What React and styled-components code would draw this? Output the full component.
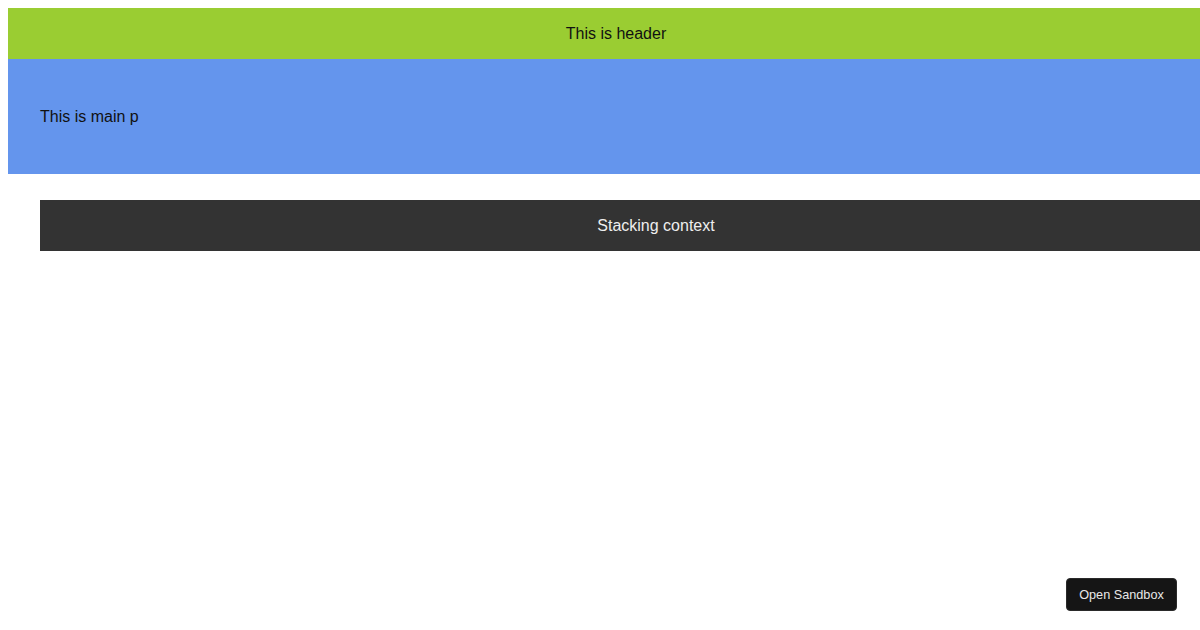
import React from "react";
import styled, { createGlobalStyle } from "styled-components";

const GlobalStyle = createGlobalStyle`
  html {
    overflow: hidden;
  }
  body {
    margin: 8px 0 8px 8px;
    font-family: "Liberation Sans", Arial, sans-serif;
    font-size: 16px;
    line-height: 19px;
    color: #111;
    background: #fff;
  }
  body, #root {
    overflow: visible !important;
  }
`;

const Header = styled.header`
  width: calc(100vw + 16px);
  padding: 16px 0;
  background: #9acd32;
  text-align: center;
`;

const Main = styled.main`
  width: calc(100vw + 16px);
  padding: 32px;
  box-sizing: border-box;
  background: #6495ed;
  p {
    margin: 16px 0;
  }
`;

const Stacking = styled.div`
  width: calc(100vw + 32px);
  margin: 26px 0 0 32px;
  padding: 16px 0;
  background: #333;
  color: #eee;
  text-align: center;
`;

const SandboxButton = styled.button`
  position: fixed;
  right: 23px;
  bottom: 19px;
  width: 111px;
  height: 33px;
  padding: 0;
  border: 1px solid #2a2a2a;
  border-radius: 4px;
  background: #151515;
  color: #e8e8e8;
  font-family: "Liberation Sans", Arial, sans-serif;
  font-size: 12.7px;
  cursor: pointer;
`;

export default function App() {
  return (
    <>
      <GlobalStyle />
      <Header>This is header</Header>
      <Main>
        <p>This is main p</p>
      </Main>
      <Stacking>Stacking context</Stacking>
      <SandboxButton>Open Sandbox</SandboxButton>
    </>
  );
}
